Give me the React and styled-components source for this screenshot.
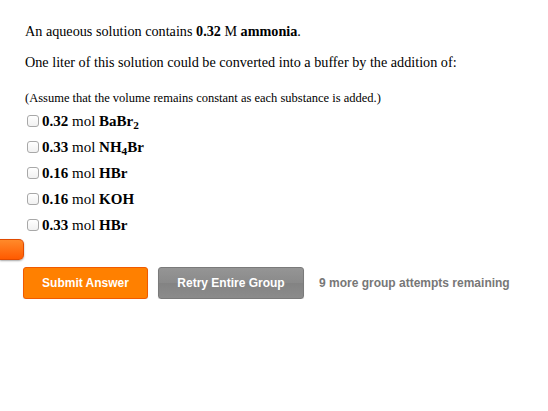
import styled, { createGlobalStyle } from "styled-components";

const Global = createGlobalStyle`
  body {
    margin: 0;
    background: #fff;
    font-family: "Liberation Serif", "Times New Roman", serif;
    color: #000;
  }
  sub {
    font-size: 0.75em;
    line-height: 0;
    vertical-align: -0.3em;
  }
`;

const Page = styled.div`
  padding: 22px 0 0 25px;
`;

const Para = styled.p`
  margin: 0 0 13px;
  font-size: 14.2px;
  line-height: 18px;
`;

const Note = styled.p`
  margin: 19px 0 6px;
  font-size: 12.5px;
  line-height: 16px;
`;

const Options = styled.div`
  display: flex;
  flex-direction: column;
  gap: 8px;
  padding-left: 2px;
`;

const Option = styled.label`
  display: flex;
  align-items: center;
  gap: 3px;
  font-size: 15px;
  line-height: 18px;
`;

const Box = styled.span`
  width: 10px;
  height: 10px;
  border: 1px solid #a8a8a8;
  border-radius: 3px;
  background: linear-gradient(#fff, #f1f1f1);
  flex-shrink: 0;
`;

const Tab = styled.div`
  width: 23px;
  height: 19px;
  margin: 5px 0 0 0;
  background: linear-gradient(#ff8a2a, #ff5a00);
  border: 1px solid #e04a00;
  border-left: none;
  border-radius: 0 5px 5px 0;
  box-shadow: 0 1px 2px rgba(0, 0, 0, 0.35);
`;

const Actions = styled.div`
  display: flex;
  align-items: center;
  padding: 7px 0 0 23px;
  font-family: "Liberation Sans", Arial, sans-serif;
`;

const Button = styled.button`
  height: 32px;
  padding: 0;
  width: ${(p) => p.$w}px;
  margin-right: ${(p) => p.$gap}px;
  border-radius: 3px;
  font-family: inherit;
  font-size: 12px;
  font-weight: bold;
  color: #fff;
  border: 1px solid ${(p) => (p.$orange ? "#f05a00" : "#7a7a7a")};
  background: ${(p) =>
    p.$orange
      ? "#ff8000"
      : "linear-gradient(#959595, #8a8a8a 50%, #838383 50%, #8b8b8b)"};
  box-shadow: 0 1px 1px rgba(0, 0, 0, 0.15);
`;

const Remaining = styled.span`
  font-size: 12px;
  font-weight: bold;
  color: #777;
`;

export default function App() {
  return (
    <>
      <Global />
      <Page>
        <Para>
          An aqueous solution contains <b>0.32</b> M <b>ammonia</b>.
        </Para>
        <Para>One liter of this solution could be converted into a buffer by the addition of:</Para>
        <Note>(Assume that the volume remains constant as each substance is added.)</Note>
        <Options>
          <Option>
            <Box />
            <span>
              <b>0.32</b> mol <b>BaBr<sub>2</sub></b>
            </span>
          </Option>
          <Option>
            <Box />
            <span>
              <b>0.33</b> mol <b>NH<sub>4</sub>Br</b>
            </span>
          </Option>
          <Option>
            <Box />
            <span>
              <b>0.16</b> mol <b>HBr</b>
            </span>
          </Option>
          <Option>
            <Box />
            <span>
              <b>0.16</b> mol <b>KOH</b>
            </span>
          </Option>
          <Option>
            <Box />
            <span>
              <b>0.33</b> mol <b>HBr</b>
            </span>
          </Option>
        </Options>
      </Page>
      <Tab />
      <Actions>
        <Button $orange $w={125} $gap={10}>Submit Answer</Button>
        <Button $w={146} $gap={15}>Retry Entire Group</Button>
        <Remaining>9 more group attempts remaining</Remaining>
      </Actions>
    </>
  );
}
